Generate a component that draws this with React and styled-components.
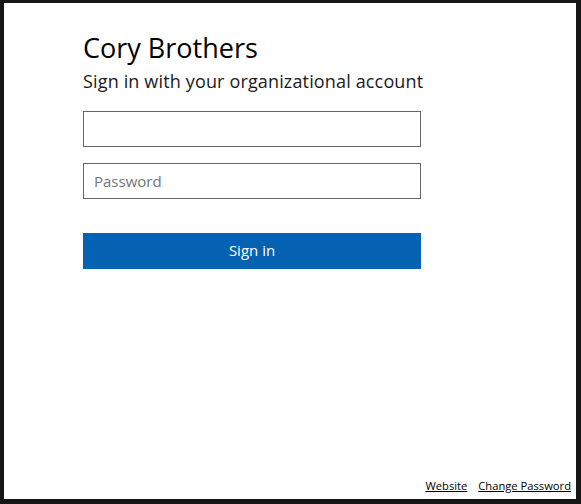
import React from 'react'
import styled, { createGlobalStyle } from 'styled-components'

const GlobalStyle = createGlobalStyle`
  html, body {
    margin: 0;
    padding: 0;
    height: 100%;
  }
  body {
    font-family: 'Open Sans', 'Noto Sans', 'Liberation Sans', sans-serif;
    background: #fff;
  }
  #root {
    height: 100%;
  }
`

const Frame = styled.div`
  box-sizing: border-box;
  height: 100%;
  display: flex;
  flex-direction: column;
  border-style: solid;
  border-color: #161616;
  border-width: 3px 5px 5px 4px;
  background: #fff;
`

const Content = styled.div`
  flex: 1;
  padding: 28px 0 0 79px;
  width: 338px;
`

const Title = styled.h1`
  margin: 0;
  font-size: 27px;
  font-weight: 400;
  line-height: 34px;
  color: #000;
`

const Subtitle = styled.h2`
  margin: 4px 0 18px 0;
  font-size: 18px;
  font-weight: 400;
  line-height: 24px;
  letter-spacing: 0.15px;
  color: #1a1a1a;
  white-space: nowrap;
`

const Field = styled.input`
  box-sizing: border-box;
  display: block;
  width: 338px;
  height: 36px;
  margin: 0 0 ${({ gap }) => gap}px 0;
  padding: 0 10px;
  border: 1px solid #666;
  border-radius: 0;
  font-family: inherit;
  font-size: 15px;
  color: #000;
  outline: none;

  ::placeholder {
    color: #666;
  }
`

const Button = styled.button`
  box-sizing: border-box;
  display: block;
  width: 338px;
  height: 36px;
  padding: 0 0 2px 0;
  border: none;
  background: #0562b3;
  color: #fff;
  font-family: inherit;
  font-size: 15px;
  cursor: pointer;
`

const Footer = styled.div`
  display: flex;
  justify-content: flex-end;
  gap: 11px;
  padding: 0 5px 6px 0;
`

const Link = styled.a`
  font-size: 11.2px;
  line-height: 15px;
  color: #000;
  text-decoration: underline;
`

export default function App() {
  return (
    <>
      <GlobalStyle />
      <Frame>
        <Content>
          <Title>Cory Brothers</Title>
          <Subtitle>Sign in with your organizational account</Subtitle>
          <Field type="text" gap={16} />
          <Field type="password" placeholder="Password" gap={34} />
          <Button>Sign in</Button>
        </Content>
        <Footer>
          <Link href="#">Website</Link>
          <Link href="#">Change Password</Link>
        </Footer>
      </Frame>
    </>
  )
}
